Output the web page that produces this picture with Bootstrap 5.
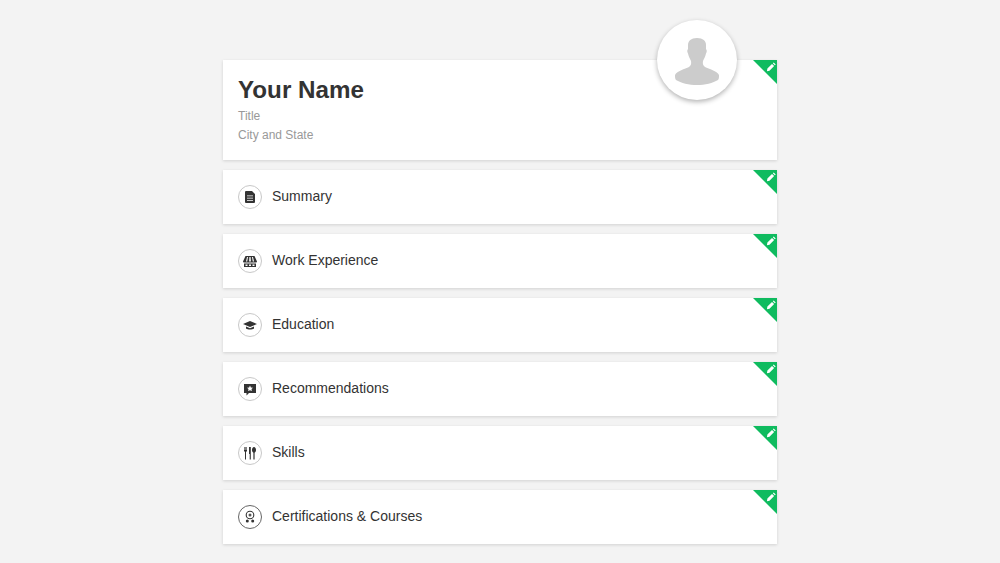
<!DOCTYPE html>
<html lang="en">
<head>
  <meta charset="UTF-8">
  <meta name="viewport" content="width=device-width, initial-scale=1.0">
  <title>Resume</title>
  <link href="https://cdn.jsdelivr.net/npm/bootstrap@5.3.0/dist/css/bootstrap.min.css" rel="stylesheet">
  <style>
    body {
      background: #f3f3f3;
      font-family: "Liberation Sans", Arial, sans-serif;
      color: #333;
    }
    .resume-wrap {
      width: 554px;
      padding-top: 60px;
      padding-bottom: 19px;
      gap: 10px;
    }
    .resume-card {
      border: 0;
      border-radius: 0;
      background: #fff;
      box-shadow: 0 1px 3px rgba(0, 0, 0, .14);
    }
    .head-card {
      height: 100px;
      padding: 15px;
    }
    .head-name {
      font-size: 24.2px;
      font-weight: 700;
      line-height: 30px;
      margin: 0 0 2px;
      color: #333;
    }
    .head-meta {
      font-size: 12px;
      line-height: 19px;
      color: #999;
    }
    .row-card {
      height: 54px;
      padding: 0 15px 1px;
      font-size: 14px;
      color: #333;
    }
    .sec-icon {
      width: 24px;
      height: 24px;
      border: 1px solid #c8c8c8;
      border-radius: 50%;
      margin-right: 10px;
      margin-top: 1px;
      flex: none;
    }
    .sec-icon.dark { border-color: #666; }
    .sec-icon svg { width: 14px; height: 14px; display: block; }
    .edit-corner {
      position: absolute;
      top: 0;
      right: 0;
      width: 24px;
      height: 24px;
      background: #0fbb5f;
      clip-path: polygon(0 0, 100% 0, 100% 100%);
    }
    .edit-corner svg {
      position: absolute;
      top: 2px;
      right: 1px;
      width: 10px;
      height: 10px;
    }
    .avatar {
      position: absolute;
      top: -40px;
      right: 40px;
      width: 80px;
      height: 80px;
      padding-top: 3px;
      background: #fff;
      border-radius: 50%;
      box-shadow: 0 2px 5px rgba(0, 0, 0, .3);
    }
    .avatar svg { width: 44px; height: 47px; }
  </style>
</head>
<body>
  <div class="resume-wrap mx-auto d-flex flex-column">
    <div class="resume-card head-card position-relative">
      <h1 class="head-name">Your Name</h1>
      <div class="head-meta">Title</div>
      <div class="head-meta">City and State</div>
      <div class="avatar d-flex align-items-center justify-content-center">
        <svg viewBox="0 0 44 47"><path fill="#ccc" d="M22 0C28 0 31 3 31 7L31 11C32 12 32 14 31 15.500C30.500 18 29 21 28 23C27.500 26 28 27.500 30 29C34 31 42 33 44 37C44 39 44 41 43 42C38 45 30 47 22 47C14 47 6 45 1 42C0 41 0 39 0 37C2 33 10 31 14 29C16 27.500 16.500 26 16 23C15 21 13.500 18 13 15.500C12 14 12 12 13 11L13 7C13 3 16 0 22 0Z"/></svg>
      </div>
      <span class="edit-corner"><svg viewBox="0 0 10 10"><path fill="#fff" d="M7.700.4l2 2-.9.9-2-2zM6 2l2.100 2.100-4.600 4.600-2.600.5.500-2.600z"/></svg></span>
    </div>

    <div class="resume-card row-card position-relative d-flex align-items-center">
      <span class="sec-icon d-flex align-items-center justify-content-center">
        <svg viewBox="0 0 14 14"><path fill="#333" fill-rule="evenodd" d="M3 1h6l3 3v8a1 1 0 0 1-1 1H3a1 1 0 0 1-1-1V2a1 1 0 0 1 1-1zM4 5.500v.8h6v-.8zm0 2.200v.8h6v-.8zM4 9.900v.8h6v-.8z"/></svg>
      </span>
      Summary
      <span class="edit-corner"><svg viewBox="0 0 10 10"><path fill="#fff" d="M7.700.4l2 2-.9.9-2-2zM6 2l2.100 2.100-4.600 4.600-2.600.5.500-2.600z"/></svg></span>
    </div>

    <div class="resume-card row-card position-relative d-flex align-items-center">
      <span class="sec-icon d-flex align-items-center justify-content-center">
        <svg viewBox="0 0 14 14"><path fill="#333" fill-rule="evenodd" d="M2.500 2h9L14 7.500c0 .8-.6 1-1.200 1H1.200C.6 8.500 0 8.300 0 7.500zM4 3 3 7.500h1.200L5 3zm2.400 0-.3 4.500h1.800L7.600 3zM9 3l.8 4.500H11L10 3zM1 9.500h12V13H1zm1.500 1v1.500h2v-1.500zm3.500 0v1.500h2v-1.500zm3.500 0v1.500h2v-1.500z"/></svg>
      </span>
      Work Experience
      <span class="edit-corner"><svg viewBox="0 0 10 10"><path fill="#fff" d="M7.700.4l2 2-.9.9-2-2zM6 2l2.100 2.100-4.600 4.600-2.600.5.500-2.600z"/></svg></span>
    </div>

    <div class="resume-card row-card position-relative d-flex align-items-center">
      <span class="sec-icon d-flex align-items-center justify-content-center">
        <svg viewBox="0 0 14 14"><path fill="#333" d="M7 3 0 6l7 3 7-3zM3 8.600V10.500c1 .8 2.500 1.100 4 1.100s3-.3 4-1.100V8.600l-4 1.700z"/></svg>
      </span>
      Education
      <span class="edit-corner"><svg viewBox="0 0 10 10"><path fill="#fff" d="M7.700.4l2 2-.9.9-2-2zM6 2l2.100 2.100-4.600 4.600-2.600.5.500-2.600z"/></svg></span>
    </div>

    <div class="resume-card row-card position-relative d-flex align-items-center">
      <span class="sec-icon d-flex align-items-center justify-content-center">
        <svg viewBox="0 0 14 14"><path fill="#333" fill-rule="evenodd" d="M1 2h12v9H6l-2.500 2.500V11H1zM7 3.500l-.9 1.900-2.100.3 1.500 1.400-.4 2L7 8.200l1.900.9-.4-2L10 5.700l-2.100-.3z"/></svg>
      </span>
      Recommendations
      <span class="edit-corner"><svg viewBox="0 0 10 10"><path fill="#fff" d="M7.700.4l2 2-.9.9-2-2zM6 2l2.100 2.100-4.600 4.600-2.600.5.500-2.600z"/></svg></span>
    </div>

    <div class="resume-card row-card position-relative d-flex align-items-center">
      <span class="sec-icon d-flex align-items-center justify-content-center">
        <svg viewBox="0 0 14 14"><path fill="#333" d="M1 1h.6v3h.6V1h.6v3h.6V1H4v4L3 6v7.500H2V6L1 5zM6 1h1.800v12.500H6.700V8H6zM11 1c1.200 0 2 1.400 2 3 0 1.500-.7 2.400-1.400 2.700v6.800h-1.200V6.700C9.700 6.400 9 5.500 9 4c0-1.600.8-3 2-3z"/></svg>
      </span>
      Skills
      <span class="edit-corner"><svg viewBox="0 0 10 10"><path fill="#fff" d="M7.700.4l2 2-.9.9-2-2zM6 2l2.100 2.100-4.600 4.600-2.600.5.500-2.600z"/></svg></span>
    </div>

    <div class="resume-card row-card position-relative d-flex align-items-center">
      <span class="sec-icon dark d-flex align-items-center justify-content-center">
        <svg viewBox="0 0 14 14"><circle cx="7" cy="5" r="3.800" fill="none" stroke="#333" stroke-width="1.100"/><circle cx="7" cy="5" r="1.500" fill="#555"/><circle cx="4.300" cy="11" r="1.500" fill="#333"/><circle cx="9.700" cy="11" r="1.500" fill="#333"/></svg>
      </span>
      Certifications &amp; Courses
      <span class="edit-corner"><svg viewBox="0 0 10 10"><path fill="#fff" d="M7.700.4l2 2-.9.9-2-2zM6 2l2.100 2.100-4.600 4.600-2.600.5.500-2.600z"/></svg></span>
    </div>
  </div>

  <script src="https://cdn.jsdelivr.net/npm/bootstrap@5.3.0/dist/js/bootstrap.bundle.min.js"></script>
</body>
</html>
